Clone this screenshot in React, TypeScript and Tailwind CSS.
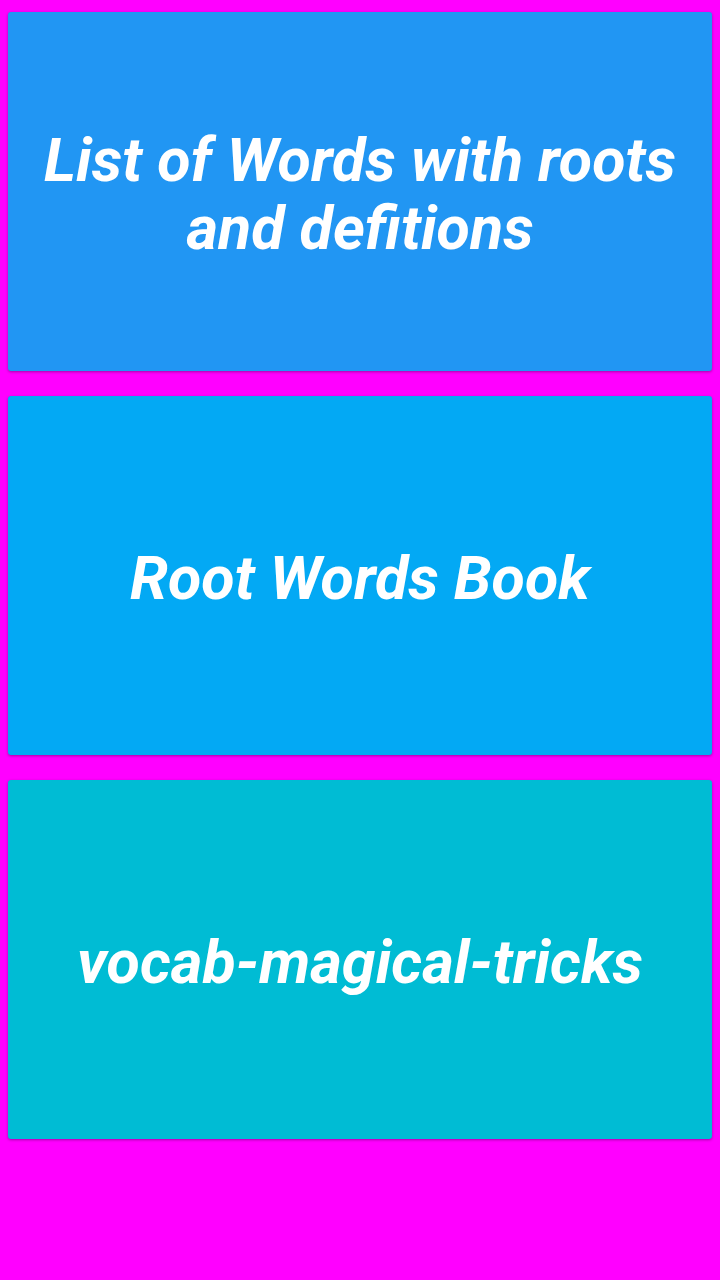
const cards = [
  { title: 'List of Words with roots and defitions', bg: 'bg-[#2196f3]' },
  { title: 'Root Words Book', bg: 'bg-[#03a9f4]' },
  { title: 'vocab-magical-tricks', bg: 'bg-[#00bcd4]' },
];

export default function App() {
  return (
    <div className="min-h-[1280px] w-[720px] bg-[#ff00ff] px-2 pt-3 flex flex-col gap-[25px]">
      {cards.map((card) => (
        <div
          key={card.title}
          className={`${card.bg} h-[359px] rounded-[3px] shadow-[0_1px_3px_rgba(0,0,0,0.35)] flex items-center justify-center px-4 pt-1`}
        >
          <p className="text-white text-center italic font-bold text-[61px] leading-[68px] font-['Roboto',sans-serif]">
            {card.title}
          </p>
        </div>
      ))}
    </div>
  );
}
